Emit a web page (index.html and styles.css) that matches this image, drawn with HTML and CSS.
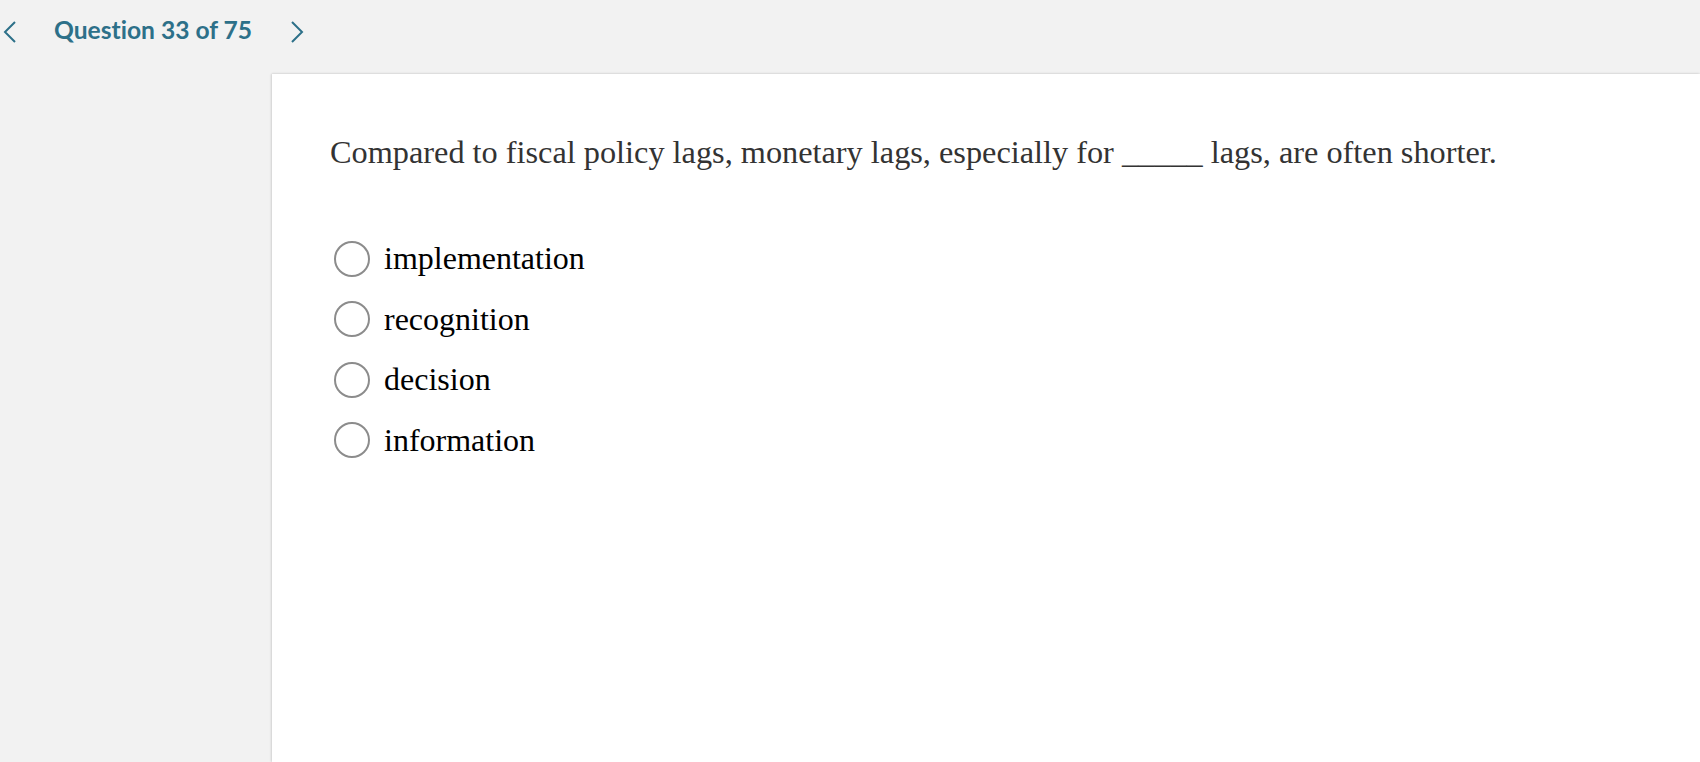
FILE: index.html
```html
<!DOCTYPE html>
<html lang="en">

<head>
    <meta charset="UTF-8">
    <title>Question 33 of 75</title>
    <link rel="stylesheet" href="styles.css">
</head>

<body>
    <div class="topbar">
        <a href="javascript:;" class="nav-arrow">
            <svg width="14" height="22" viewBox="0 0 14 22"><polyline points="12,1 2,11 12,21" /></svg>
        </a>
        <span class="q-title">Question 33 of 75</span>
        <a href="javascript:;" class="nav-arrow">
            <svg width="14" height="22" viewBox="0 0 14 22"><polyline points="2,1 12,11 2,21" /></svg>
        </a>
    </div>
    <div class="main">
        <div class="card">
            <p class="question">Compared to fiscal policy lags, monetary lags, especially for _____ lags, are often shorter.</p>
            <ul class="options">
                <li><label><span class="radio"></span>implementation</label></li>
                <li><label><span class="radio"></span>recognition</label></li>
                <li><label><span class="radio"></span>decision</label></li>
                <li><label><span class="radio"></span>information</label></li>
            </ul>
        </div>
    </div>
</body>

</html>
```

FILE: styles.css
```css
* {
    padding: 0;
    margin: 0;
    box-sizing: border-box;
}
html,
body {
    height: 100%;
}
body {
    background: #f2f2f2;
    display: flex;
    flex-direction: column;
    overflow: hidden;
}
li {
    list-style: none;
}
.topbar {
    height: 74px;
    display: flex;
    align-items: flex-start;
    padding: 18px 0 0 3px;
}
.nav-arrow {
    display: inline-block;
    width: 14px;
    height: 22px;
    margin-top: 3px;
}
.nav-arrow svg {
    display: block;
    fill: none;
    stroke: #2d7089;
    stroke-width: 2;
}
.q-title {
    font-family: "Lato", "Open Sans", sans-serif;
    font-weight: 700;
    font-size: 24.6px;
    line-height: 24px;
    font-variant-ligatures: none;
    color: #2d7089;
    margin: 0 38px 0 37px;
}
.main {
    flex: 1;
    display: flex;
    padding-left: 272px;
}
.card {
    flex: 1;
    background: #fff;
    box-shadow: -1px 0 2px rgba(0, 0, 0, 0.12), 0 -1px 2px rgba(0, 0, 0, 0.06);
    padding: 59px 0 0 58px;
    font-family: "Liberation Serif", "Times New Roman", serif;
}
.question {
    font-size: 32.3px;
    line-height: 38px;
    color: #333;
}
.options {
    margin-top: 69px;
}
.options li {
    height: 60.5px;
}
.options label {
    display: flex;
    align-items: center;
    font-size: 32px;
    color: #000;
    gap: 14px;
    margin-left: 4px;
}
.radio {
    display: inline-block;
    width: 36px;
    height: 36px;
    border: 2px solid #8c8c8c;
    border-radius: 50%;
}
```
